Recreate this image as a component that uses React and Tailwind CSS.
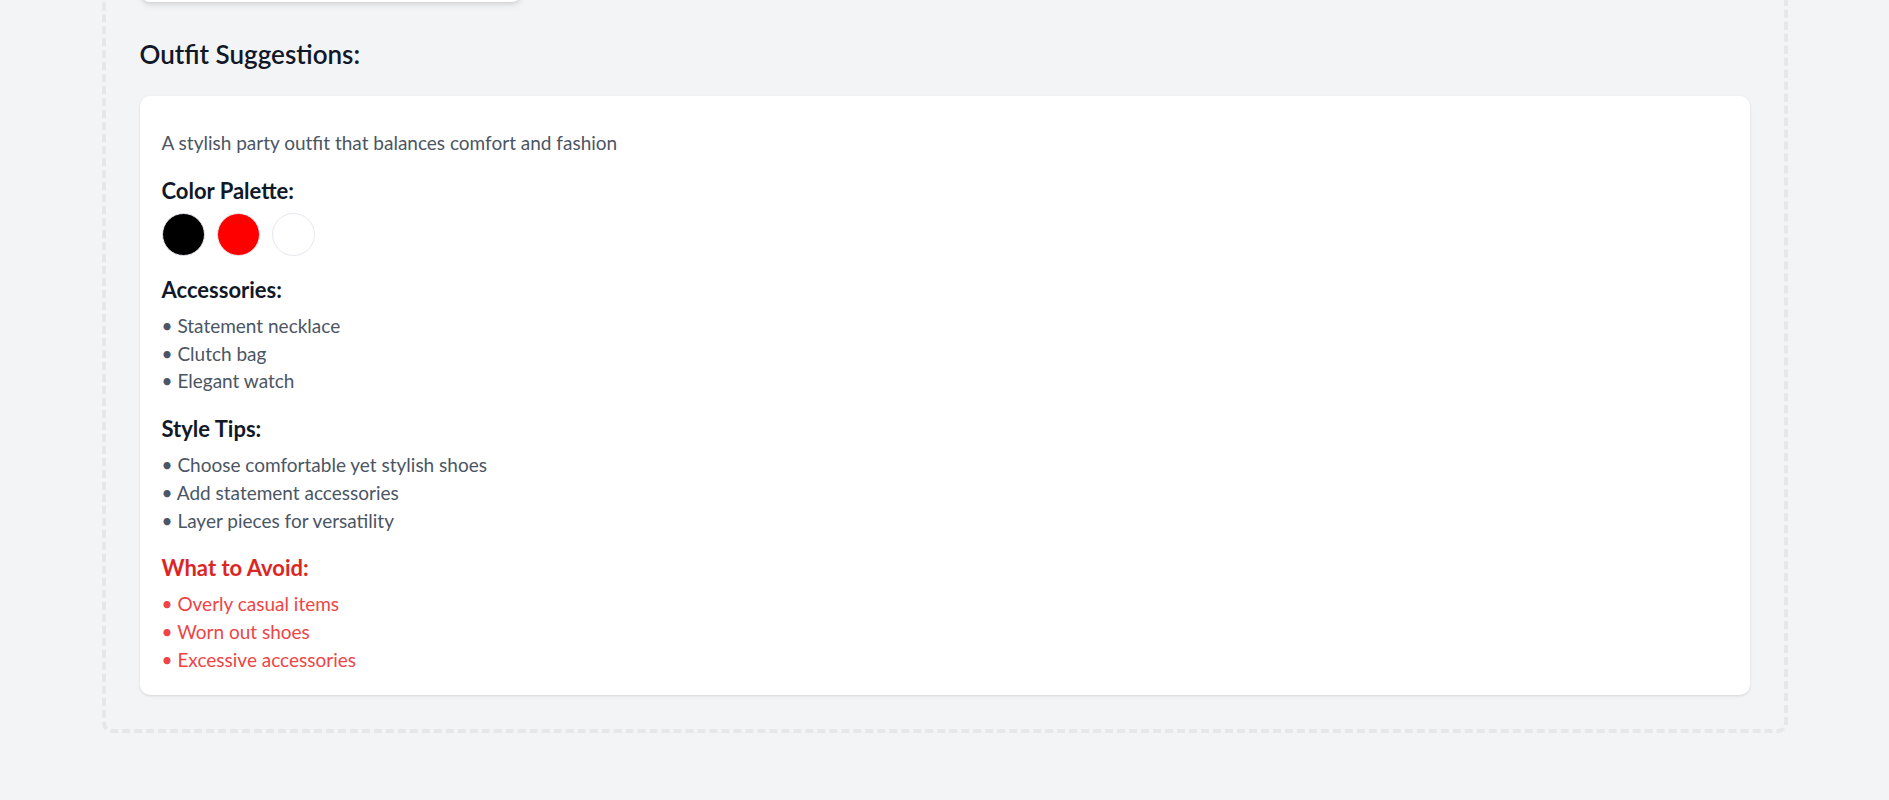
import React from 'react';

const outfit = {
  description: 'A stylish party outfit that balances comfort and fashion',
  colors: ['bg-black', 'bg-[#ff0000]', 'bg-white'],
  accessories: ['Statement necklace', 'Clutch bag', 'Elegant watch'],
  tips: ['Choose comfortable yet stylish shoes', 'Add statement accessories', 'Layer pieces for versatility'],
  avoid: ['Overly casual items', 'Worn out shoes', 'Excessive accessories'],
};

function Section({ title, items, danger }) {
  return (
    <div>
      <h4
        className={`text-[22px] leading-[28px] font-bold mb-[8px] ${
          danger ? 'text-[#dc2626]' : 'text-[#111827]'
        }`}
      >
        {title}
      </h4>
      <ul className={`text-[19px] leading-[27.7px] ${danger ? 'text-[#ef4444]' : 'text-[#4b5563]'}`}>
        {items.map((item) => (
          <li key={item}>• {item}</li>
        ))}
      </ul>
    </div>
  );
}

export default function App() {
  return (
    <div className="min-h-screen bg-[#f3f4f6] font-['Lato',sans-serif] overflow-hidden">
      <div className="w-[1686px] mx-auto mt-[-60px] border-[4px] border-dashed border-[#e5e7eb] rounded-[10px] px-[34px] pb-[34px]">
        <div className="w-[382px] h-[58px] bg-white rounded-[10px] shadow-md"></div>

        <h3 className="mt-[36px] mb-[26px] text-[26px] leading-[32px] font-semibold text-[#111827]">
          Outfit Suggestions:
        </h3>

        <div className="bg-white rounded-[10px] shadow pt-[33px] pb-[22px] px-[22px] flex flex-col gap-[20px]">
          <p className="text-[19px] leading-[28px] text-[#4b5563]">{outfit.description}</p>

          <div>
            <h4 className="text-[22px] leading-[28px] font-bold text-[#111827] mb-[8px]">Color Palette:</h4>
            <div className="flex gap-[12px]">
              {outfit.colors.map((c) => (
                <div key={c} className={`w-[43px] h-[43px] rounded-full border border-[#e5e7eb] ${c}`}></div>
              ))}
            </div>
          </div>

          <Section title="Accessories:" items={outfit.accessories} />
          <Section title="Style Tips:" items={outfit.tips} />
          <Section title="What to Avoid:" items={outfit.avoid} danger />
        </div>
      </div>
    </div>
  );
}
